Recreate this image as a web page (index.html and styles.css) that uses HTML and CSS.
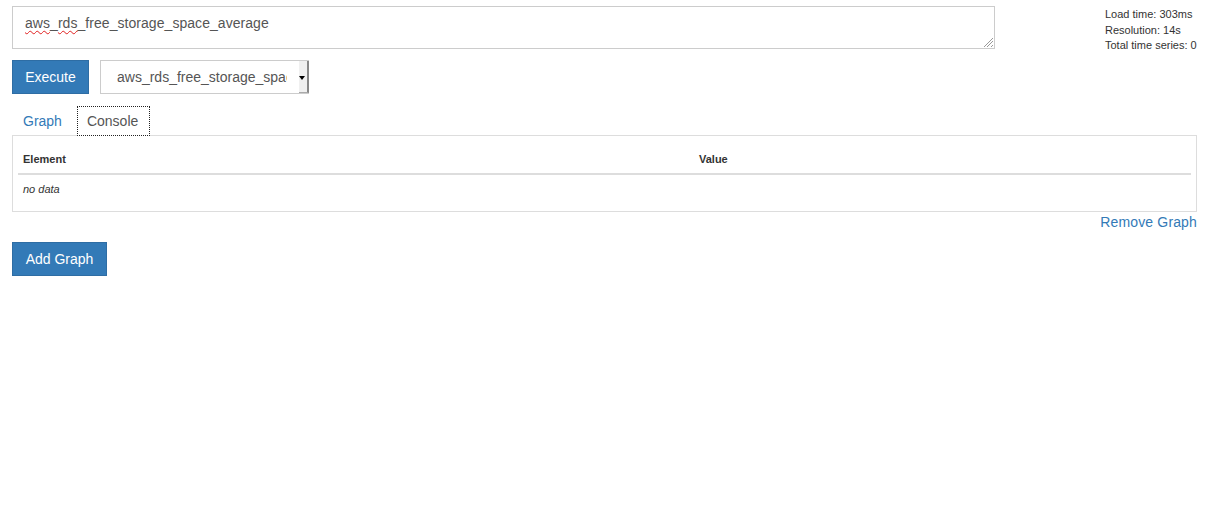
FILE: index.html
```html
<!DOCTYPE html>
<html>
<head>
<meta charset="utf-8">
<link rel="stylesheet" href="styles.css">
</head>
<body>
<div class="page">
  <div class="top-row">
    <div class="expr-col">
      <div class="expr-input"><span class="misspelled">aws</span>_<span class="misspelled">rds</span>_free_storage_space_average<span class="resize-grip"></span></div>
    </div>
    <div class="stats">
      <div>Load time: 303ms</div>
      <div>Resolution: 14s</div>
      <div>Total time series: 0</div>
    </div>
  </div>
  <div class="controls">
    <button class="btn">Execute</button>
    <div class="metric-select">
      <span class="select-text">aws_rds_free_storage_space_average</span>
      <span class="select-arrow"></span>
    </div>
  </div>
  <div class="tabs">
    <span class="tab">Graph</span>
    <span class="tab active">Console</span>
  </div>
  <div class="panel">
    <table class="data-table">
      <thead>
        <tr><th class="col-element">Element</th><th>Value</th></tr>
      </thead>
      <tbody>
        <tr><td colspan="2"><i>no data</i></td></tr>
      </tbody>
    </table>
  </div>
  <div class="remove-row"><a class="link">Remove Graph</a></div>
  <button class="btn add-btn">Add Graph</button>
</div>
</body>
</html>
```
FILE: styles.css
```css
* { box-sizing: border-box; }
html, body { margin: 0; padding: 0; background: #fff; }
body {
  font-family: "Liberation Sans", Arial, sans-serif;
  font-size: 14px;
  color: #333;
}
.page {
  padding: 6px 9px 0 12px;
}
.top-row {
  display: flex;
  justify-content: space-between;
  align-items: flex-start;
  height: 43px;
}
.expr-col { width: 983px; }
.expr-input {
  position: relative;
  height: 43px;
  border: 1px solid #ccc;
  padding: 8px 12px;
  line-height: 17px;
  color: #555;
  font-size: 14px;
  letter-spacing: 0.05px;
}
.misspelled {
  text-decoration: underline wavy #e02020;
  text-decoration-thickness: 1px;
  text-underline-offset: 2px;
}
.resize-grip {
  position: absolute;
  right: 1px;
  bottom: 1px;
  width: 9px;
  height: 9px;
  background: linear-gradient(135deg, transparent 0 45%, #999 45% 52%, transparent 52% 65%, #999 65% 72%, transparent 72% 85%, #999 85% 92%, transparent 92%);
}
.stats {
  font-size: 11px;
  line-height: 15.5px;
  color: #333;
  padding-top: 1px;
  width: 92px;
}
.controls {
  display: flex;
  gap: 11px;
  margin-top: 11px;
}
.btn {
  background: #337ab7;
  border: 1px solid #2e6da4;
  color: #fff;
  font-family: "Liberation Sans", Arial, sans-serif;
  font-size: 14px;
  height: 34px;
  padding: 0 12px;
  margin: 0;
  border-radius: 0;
}
.controls .btn { width: 77px; }
.metric-select {
  width: 209px;
  height: 34px;
  border: 1px solid #ccc;
  border-right: none;
  display: flex;
  align-items: center;
  position: relative;
  color: #555;
}
.select-text {
  display: block;
  width: 170px;
  margin-left: 16px;
  overflow: hidden;
  white-space: nowrap;
}
.select-arrow {
  position: absolute;
  right: 0;
  top: 0;
  bottom: 0;
  width: 10px;
  background: #f0f0f0;
  border-right: 2px solid #888;
  border-bottom: 1px solid #aaa;
}
.select-arrow::after {
  content: "";
  position: absolute;
  left: 0;
  top: 15px;
  border-left: 3px solid transparent;
  border-right: 3px solid transparent;
  border-top: 4px solid #000;
}
.tabs {
  display: flex;
  margin-top: 12px;
  position: relative;
  z-index: 1;
}
.tab {
  display: block;
  height: 30px;
  line-height: 29px;
  padding: 0 10px;
  color: #337ab7;
  border: 1px solid transparent;
}
.tab.active {
  color: #555;
  margin-left: 4px;
  padding: 0 9px;
  background: #fff;
  border: 1px dotted #222;
  width: 73px;
}
.panel {
  border: 1px solid #ddd;
  margin-top: -1px;
  padding: 5px 5px 10px 5px;
  height: 77px;
}
.data-table {
  width: 100%;
  border-collapse: collapse;
  font-size: 11px;
}
.data-table th {
  text-align: left;
  font-weight: bold;
  padding: 11px 5px 7px 5px;
  border-bottom: 2px solid #ddd;
  line-height: 14px;
}
.data-table th.col-element { width: 676px; }
.data-table td {
  padding: 7px 5px;
  line-height: 14px;
}
.remove-row {
  text-align: right;
  margin-top: 1px;
  line-height: 18px;
  letter-spacing: 0.15px;
}
.link { color: #337ab7; }
.add-btn {
  margin-top: 11px;
  width: 95px;
  padding: 0;
}
```
